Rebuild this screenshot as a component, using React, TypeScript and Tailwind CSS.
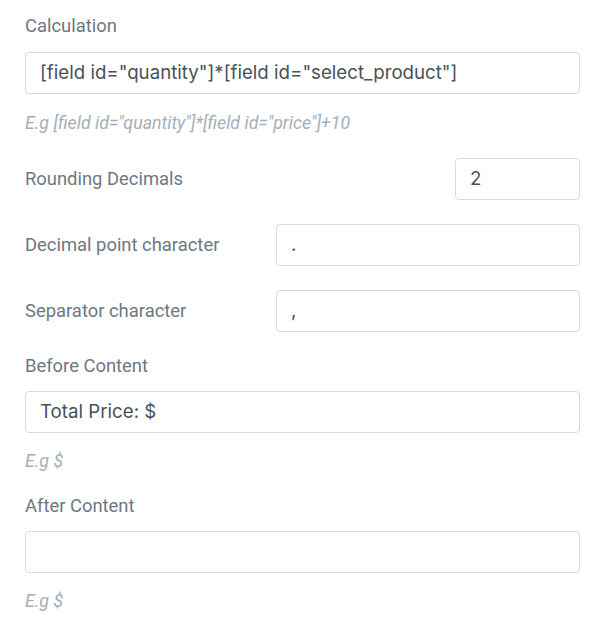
import React from 'react'

const font = { fontFamily: 'Roboto, "Liberation Sans", sans-serif' }

function Box({ value, className = '' }: { value: string; className?: string }) {
  return (
    <div
      className={`h-[42px] flex items-center px-[14px] border border-[#d5dadf] rounded-[4px] bg-white text-[18.7px] text-[#495157] ${className}`}
      style={{ fontFamily: 'Inter, "Liberation Sans", sans-serif' }}
    >
      {value}
    </div>
  )
}

function Hint({ children }: { children: React.ReactNode }) {
  return <div className="text-[17.8px] italic text-[#a4afb7] leading-none">{children}</div>
}

function Label({ children }: { children: React.ReactNode }) {
  return <div className="text-[18.4px] text-[#6d7882] leading-none">{children}</div>
}

export default function App() {
  return (
    <div className="w-[600px] h-[635px] bg-white pl-[25px] pr-[20px] pt-[17px] flex flex-col" style={font}>
      <Label>Calculation</Label>
      <Box value={'[field id="quantity"]*[field id="select_product"]'} className="mt-[17px]" />
      <div className="mt-[20px]">
        <Hint>E.g [field id="quantity"]*[field id="price"]+10</Hint>
      </div>

      <div className="mt-[26px] flex items-center justify-between">
        <Label>Rounding Decimals</Label>
        <Box value="2" className="w-[125px]" />
      </div>

      <div className="mt-[24px] flex items-center">
        <div className="w-[251px]">
          <Label>Decimal point character</Label>
        </div>
        <Box value="." className="flex-1" />
      </div>

      <div className="mt-[24px] flex items-center">
        <div className="w-[251px]">
          <Label>Separator character</Label>
        </div>
        <Box value="," className="flex-1" />
      </div>

      <div className="mt-[25px]">
        <Label>Before Content</Label>
      </div>
      <Box value="Total Price: $" className="mt-[15px]" />
      <div className="mt-[19px]">
        <Hint>E.g $</Hint>
      </div>

      <div className="mt-[28px]">
        <Label>After Content</Label>
      </div>
      <Box value="" className="mt-[15px]" />
      <div className="mt-[19px]">
        <Hint>E.g $</Hint>
      </div>
    </div>
  )
}
